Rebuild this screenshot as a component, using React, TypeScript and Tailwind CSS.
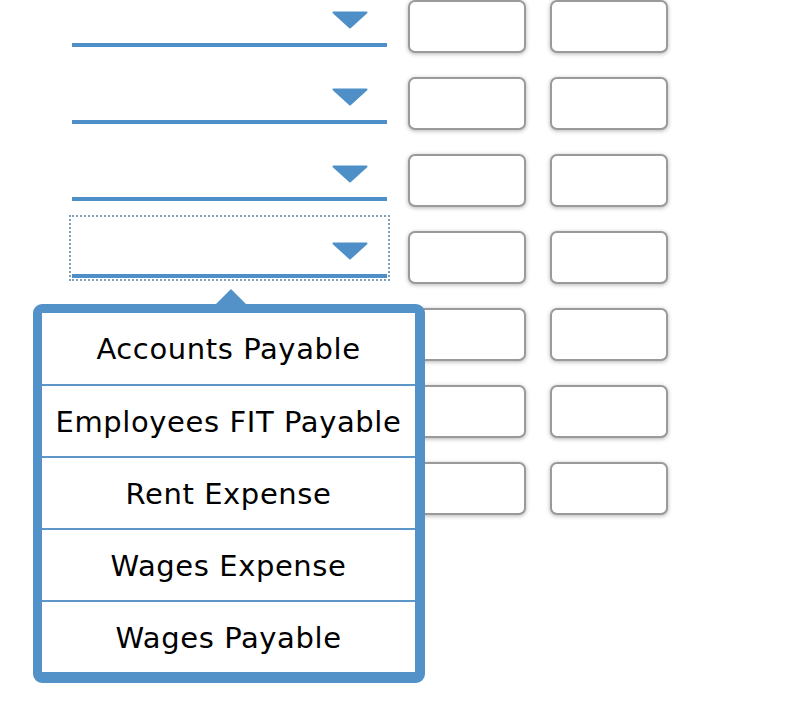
import React from 'react';

const ACCOUNTS = [
  'Accounts Payable',
  'Employees FIT Payable',
  'Rent Expense',
  'Wages Expense',
  'Wages Payable',
];

const ROWS = 7;
const SELECT_ROWS = 4;
const OPEN_ROW = 3;

const Caret: React.FC = () => (
  <svg width="36" height="18" viewBox="0 0 36 18" className="block">
    <polygon
      points="1.5,1.5 34.5,1.5 18,16.5"
      fill="#4f8fc7"
      stroke="#4f8fc7"
      strokeWidth="2"
      strokeLinejoin="round"
    />
  </svg>
);

const AmountBox: React.FC = () => (
  <div className="w-[118px] h-[53px] rounded-[7px] border-2 border-[#9a9a9a] bg-white shadow-[0_1px_4px_rgba(0,0,0,0.3)]" />
);

const AccountMenu: React.FC = () => (
  <div className="absolute left-[-39px] top-[86px] z-10 w-[392px]">
    {/* pointer up to the select */}
    <svg
      width="34"
      height="18"
      viewBox="0 0 34 18"
      className="absolute left-[181px] top-[-16px]"
    >
      <polygon points="0,18 17,1 34,18" fill="#5292c9" />
    </svg>
    <div className="rounded-[9px] border-[9px] border-b-[11px] border-r-[10px] border-[#5292c9] bg-white">
      {ACCOUNTS.map((name, i) => (
        <div
          key={name}
          className={
            'flex items-center justify-center pt-[3px] text-[29px] tracking-[0.6px] text-black ' +
            (i === 0 ? 'h-[71px]' : 'h-[72px] border-t-2 border-[#5d96c8]')
          }
        >
          {name}
        </div>
      ))}
    </div>
  </div>
);

const AccountSelect: React.FC<{ open?: boolean }> = ({ open }) => (
  <div
    className={
      'relative -mt-[13px] w-[315px] h-[60px] flex items-end justify-end pr-[19px] pb-[14px] border-b-4 border-[#4f8fc7] ' +
      (open ? 'outline-2 outline-dotted outline-[#7f9fb6] outline-offset-[1px]' : '')
    }
  >
    <Caret />
    {open && <AccountMenu />}
  </div>
);

export default function App() {
  return (
    <div
      className="min-h-[702px] w-[801px] bg-white overflow-hidden"
      style={{ fontFamily: '"DejaVu Sans", Verdana, sans-serif' }}
    >
      <div className="flex flex-col gap-[24px] pl-[72px]">
        {Array.from({ length: ROWS }).map((_, r) => (
          <div key={r} className="flex items-start h-[53px]">
            <div className="w-[315px]">
              {r < SELECT_ROWS && <AccountSelect open={r === OPEN_ROW} />}
            </div>
            <div className="ml-[21px] flex gap-[24px]">
              <AmountBox />
              <AmountBox />
            </div>
          </div>
        ))}
      </div>
    </div>
  );
}
